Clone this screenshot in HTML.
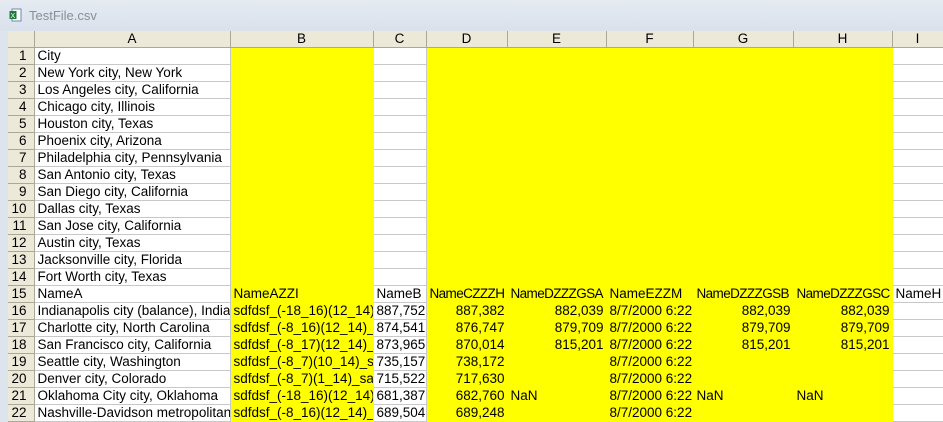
<!DOCTYPE html>
<html><head><meta charset="utf-8"><style>
html,body{margin:0;padding:0;width:943px;height:420px;overflow:hidden;background:#dde4ee;font-family:"Liberation Sans",Arial,sans-serif;}
#title{position:absolute;left:0;top:0;width:943px;height:31px;background:linear-gradient(#e6ebf2,#d9e1ec);}
#title span{position:absolute;left:29px;top:8px;font-size:13px;color:#8a8f96;}
#icon{position:absolute;left:9px;top:8px;width:13px;height:14px;}
#grid{position:absolute;left:8px;top:31px;width:935px;overflow:hidden;}
table{border-collapse:collapse;table-layout:fixed;font-size:13.5px;width:935px;}
td{height:16px;padding:0 0 0 3px;border-right:1px solid #c8c8c8;border-bottom:1px solid #c8c8c8;white-space:nowrap;overflow:hidden;line-height:16px;background:#fff;color:#000;}
td.h{background:#ece9d8;border-color:#aca899;text-align:center;padding:0;}
td.r{background:#ece9d8;border-color:#aca899;text-align:right;padding:0 7px 0 0;}
td.y{background:#ff0;border-color:#ff0;}
td.n{text-align:right;padding-right:2px;}
td.k{letter-spacing:-0.6px;}
</style></head><body>
<div id="title"><svg id="icon" viewBox="0 0 13 14"><rect x="3" y="1" width="9" height="12" fill="#fff" stroke="#6a8ab0"/><rect x="0.5" y="3" width="7" height="8" fill="#1e7a3a"/><text x="1.5" y="10" font-size="7" fill="#fff" font-family="Liberation Sans">X</text></svg><span>TestFile.csv</span></div>
<div id="grid"><table>
<colgroup><col style="width:26px"><col style="width:196px"><col style="width:143px"><col style="width:53px"><col style="width:81px"><col style="width:99px"><col style="width:87px"><col style="width:100px"><col style="width:99px"><col style="width:51px"></colgroup>
<tr><td class="h"></td><td class="h">A</td><td class="h">B</td><td class="h">C</td><td class="h">D</td><td class="h">E</td><td class="h">F</td><td class="h">G</td><td class="h">H</td><td class="h">I</td></tr>
<tr><td class="r">1</td><td>City</td><td class="y"></td><td></td><td class="y"></td><td class="y"></td><td class="y"></td><td class="y"></td><td class="y"></td><td></td></tr>
<tr><td class="r">2</td><td>New York city, New York</td><td class="y"></td><td></td><td class="y"></td><td class="y"></td><td class="y"></td><td class="y"></td><td class="y"></td><td></td></tr>
<tr><td class="r">3</td><td>Los Angeles city, California</td><td class="y"></td><td></td><td class="y"></td><td class="y"></td><td class="y"></td><td class="y"></td><td class="y"></td><td></td></tr>
<tr><td class="r">4</td><td>Chicago city, Illinois</td><td class="y"></td><td></td><td class="y"></td><td class="y"></td><td class="y"></td><td class="y"></td><td class="y"></td><td></td></tr>
<tr><td class="r">5</td><td>Houston city, Texas</td><td class="y"></td><td></td><td class="y"></td><td class="y"></td><td class="y"></td><td class="y"></td><td class="y"></td><td></td></tr>
<tr><td class="r">6</td><td>Phoenix city, Arizona</td><td class="y"></td><td></td><td class="y"></td><td class="y"></td><td class="y"></td><td class="y"></td><td class="y"></td><td></td></tr>
<tr><td class="r">7</td><td>Philadelphia city, Pennsylvania</td><td class="y"></td><td></td><td class="y"></td><td class="y"></td><td class="y"></td><td class="y"></td><td class="y"></td><td></td></tr>
<tr><td class="r">8</td><td>San Antonio city, Texas</td><td class="y"></td><td></td><td class="y"></td><td class="y"></td><td class="y"></td><td class="y"></td><td class="y"></td><td></td></tr>
<tr><td class="r">9</td><td>San Diego city, California</td><td class="y"></td><td></td><td class="y"></td><td class="y"></td><td class="y"></td><td class="y"></td><td class="y"></td><td></td></tr>
<tr><td class="r">10</td><td>Dallas city, Texas</td><td class="y"></td><td></td><td class="y"></td><td class="y"></td><td class="y"></td><td class="y"></td><td class="y"></td><td></td></tr>
<tr><td class="r">11</td><td>San Jose city, California</td><td class="y"></td><td></td><td class="y"></td><td class="y"></td><td class="y"></td><td class="y"></td><td class="y"></td><td></td></tr>
<tr><td class="r">12</td><td>Austin city, Texas</td><td class="y"></td><td></td><td class="y"></td><td class="y"></td><td class="y"></td><td class="y"></td><td class="y"></td><td></td></tr>
<tr><td class="r">13</td><td>Jacksonville city, Florida</td><td class="y"></td><td></td><td class="y"></td><td class="y"></td><td class="y"></td><td class="y"></td><td class="y"></td><td></td></tr>
<tr><td class="r">14</td><td>Fort Worth city, Texas</td><td class="y"></td><td></td><td class="y"></td><td class="y"></td><td class="y"></td><td class="y"></td><td class="y"></td><td></td></tr>
<tr><td class="r">15</td><td>NameA</td><td class="y">NameAZZI</td><td>NameB</td><td class="y k">NameCZZZH</td><td class="y k">NameDZZZGSA</td><td class="y">NameEZZM</td><td class="y k">NameDZZZGSB</td><td class="y k">NameDZZZGSC</td><td>NameH</td></tr>
<tr><td class="r">16</td><td>Indianapolis city (balance), Indiana</td><td class="y">sdfdsf_(-18_16)(12_14)_sadf</td><td>887,752</td><td class="y n">887,382</td><td class="y n">882,039</td><td class="y">8/7/2000 6:22</td><td class="y n">882,039</td><td class="y n">882,039</td><td></td></tr>
<tr><td class="r">17</td><td>Charlotte city, North Carolina</td><td class="y">sdfdsf_(-8_16)(12_14)_sadf</td><td>874,541</td><td class="y n">876,747</td><td class="y n">879,709</td><td class="y">8/7/2000 6:22</td><td class="y n">879,709</td><td class="y n">879,709</td><td></td></tr>
<tr><td class="r">18</td><td>San Francisco city, California</td><td class="y">sdfdsf_(-8_17)(12_14)_sadf</td><td>873,965</td><td class="y n">870,014</td><td class="y n">815,201</td><td class="y">8/7/2000 6:22</td><td class="y n">815,201</td><td class="y n">815,201</td><td></td></tr>
<tr><td class="r">19</td><td>Seattle city, Washington</td><td class="y">sdfdsf_(-8_7)(10_14)_sadf</td><td>735,157</td><td class="y n">738,172</td><td class="y"></td><td class="y">8/7/2000 6:22</td><td class="y"></td><td class="y"></td><td></td></tr>
<tr><td class="r">20</td><td>Denver city, Colorado</td><td class="y">sdfdsf_(-8_7)(1_14)_sadf</td><td>715,522</td><td class="y n">717,630</td><td class="y"></td><td class="y">8/7/2000 6:22</td><td class="y"></td><td class="y"></td><td></td></tr>
<tr><td class="r">21</td><td>Oklahoma City city, Oklahoma</td><td class="y">sdfdsf_(-18_16)(12_14)_sadf</td><td>681,387</td><td class="y n">682,760</td><td class="y">NaN</td><td class="y">8/7/2000 6:22</td><td class="y">NaN</td><td class="y">NaN</td><td></td></tr>
<tr><td class="r">22</td><td>Nashville-Davidson metropolitan government</td><td class="y">sdfdsf_(-8_16)(12_14)_sadf</td><td>689,504</td><td class="y n">689,248</td><td class="y"></td><td class="y">8/7/2000 6:22</td><td class="y"></td><td class="y"></td><td></td></tr>
</table></div>
</body></html>
